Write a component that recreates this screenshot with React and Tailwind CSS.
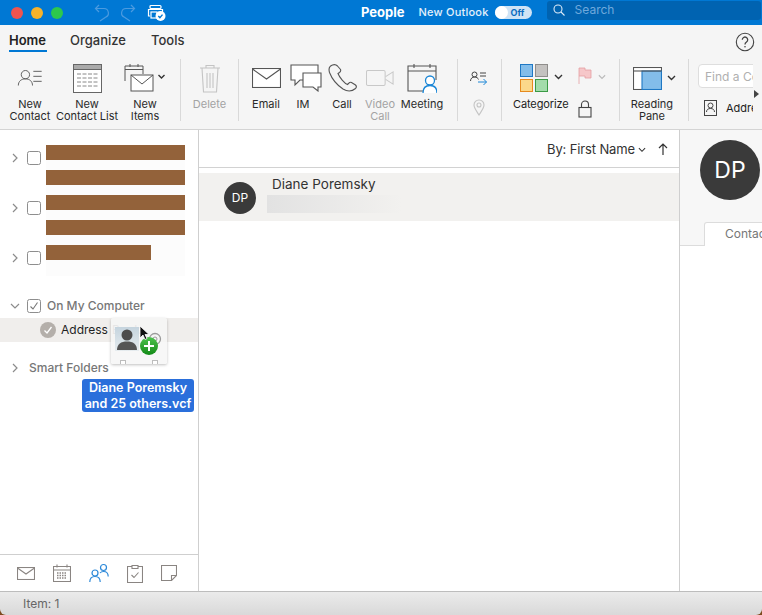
import React from "react";

const Sep = ({ ml = "" }) => <div className={`w-px h-[62px] bg-[#d9d9d9] shrink-0 ${ml}`} />;

const RibbonBtn = ({ w, label, dim, children }) => (
  <div className={`shrink-0 flex flex-col items-center pt-[3px] ${w}`}>
    <div className="h-[32px] w-full flex items-center justify-center">{children}</div>
    <div className={`mt-[4px] text-[11px] leading-[12px] text-center whitespace-pre ${dim ? "text-[#a3a3a3]" : "text-[#2a2a2a]"}`}>{label}</div>
  </div>
);

const Chevron = ({ open, cls = "" }) => (
  <svg width="10" height="10" viewBox="0 0 10 10" className={cls} fill="none" stroke="#8c8c8c" strokeWidth="1.2">
    {open ? <path d="M1 3l4 4 4-4" /> : <path d="M3 1l4 4-4 4" />}
  </svg>
);

const Caret = () => (
  <svg className="shrink-0" width="9" height="6" viewBox="0 0 9 6" fill="none" stroke="#333" strokeWidth="1.4"><path d="M1 1l3.5 3.5L8 1" /></svg>
);

const Check = ({ checked }) => (
  <div className="w-[14px] h-[14px] rounded-[2.5px] border-[1.3px] border-[#8e8e8e] bg-white flex items-center justify-center shrink-0">
    {checked && <svg width="10" height="10" viewBox="0 0 10 10" fill="none" stroke="#777" strokeWidth="1.1"><path d="M1.5 5.5L4 8l4.5-6.5" /></svg>}
  </div>
);

const TreeGroup = ({ rows }) => (
  <div className="flex">
    <div className="w-[46px] h-[25px] pl-[10px] pr-[5px] flex items-center justify-between shrink-0">
      <Chevron />
      <Check />
    </div>
    <div className="w-[139px] flex flex-col">
      {rows.map((w, i) => (
        <div key={i} className="h-[25px] bg-[#fcfcfc]">
          <div className={`h-[15px] bg-[#93623a] ${w}`} />
        </div>
      ))}
    </div>
  </div>
);

export default function App() {
  return (
    <div className="relative w-[762px] h-[615px] overflow-hidden bg-[#7d4a1e] flex flex-col font-['Inter','Liberation_Sans',sans-serif] text-[#222]">
      {/* Title bar */}
      <div className="h-[25px] bg-[#0078d4] flex items-center shrink-0">
        <div className="w-[12px] h-[12px] rounded-full bg-[#f0544f] ml-[11px]" />
        <div className="w-[12px] h-[12px] rounded-full bg-[#f7b32b] ml-[8px]" />
        <div className="w-[12px] h-[12px] rounded-full bg-[#2dc84d] ml-[8px]" />
        <svg className="ml-[31px]" width="16" height="18" viewBox="0 0 16 18" fill="none" stroke="#4b9be0" strokeWidth="1.2">
          <path d="M5 1L1.5 4.5 5 8M1.5 4.5H10a4.5 4.5 0 0 1 1.5 8.7L6 17" />
        </svg>
        <svg className="ml-[10px]" width="16" height="18" viewBox="0 0 16 18" fill="none" stroke="#4b9be0" strokeWidth="1.2">
          <path d="M11 1l3.5 3.5L11 8M14.5 4.5H6a4.5 4.5 0 0 0-1.5 8.7L10 17" />
        </svg>
        <svg className="ml-[11px]" width="20" height="18" viewBox="0 0 20 18" fill="none" stroke="#fff" strokeWidth="1.2">
          <rect x="3" y="1.5" width="11" height="3" rx="1" />
          <path d="M3 12H1.5V5.5h14V8" />
          <rect x="4" y="8" width="6" height="6" />
          <circle cx="13.5" cy="12" r="5" fill="#fff" stroke="none" />
          <path d="M11.3 12l1.6 1.6 2.6-3" stroke="#0078d4" strokeWidth="1.4" />
        </svg>
        <span className="ml-[194px] text-[13px] font-bold text-white leading-none">People</span>
        <span className="ml-[14px] text-[11px] font-medium tracking-[0.02em] text-[#e3f0fb] leading-none">New Outlook</span>
        <div className="ml-[6px] w-[37px] h-[13px] rounded-full bg-[#cfe3f5] flex items-center relative">
          <div className="w-[13px] h-[13px] rounded-full bg-white" />
          <span className="ml-[3px] text-[9px] font-bold text-[#0a6cc0] leading-none">Off</span>
        </div>
        <div className="ml-[15px] w-[214px] h-[19px] mb-[5px] bg-[#0063b1] rounded-[3px] flex items-center">
          <svg className="ml-[6px]" width="12" height="12" viewBox="0 0 12 12" fill="none" stroke="#dcebf8" strokeWidth="1.1"><circle cx="5" cy="5" r="4" /><path d="M8 8l3.5 3.5" /></svg>
          <span className="ml-[10px] text-[12px] text-[#6fa9dc] leading-none">Search</span>
        </div>
      </div>

      {/* Ribbon */}
      <div className="h-[105px] bg-[#f5f5f5] border-b border-[#d4d4d4] shrink-0 flex flex-col">
        <div className="h-[33px] flex items-start pl-[9px] pt-[8px] relative shrink-0">
          <div className="w-[38px] h-[19px] border-b-2 border-[#0078d4] text-[13px] font-semibold leading-[14px] whitespace-nowrap">Home</div>
          <div className="ml-[23px] text-[13px] font-medium leading-[14px] text-[#333]">Organize</div>
          <div className="ml-[25px] text-[13px] font-medium leading-[14px] text-[#333]">Tools</div>
          <svg className="ml-auto mr-[7px] -mt-[1px]" width="20" height="20" viewBox="0 0 20 20" fill="none" stroke="#444" strokeWidth="1.1">
            <circle cx="10" cy="10" r="8.7" />
            <path d="M7.3 7.8a2.7 2.7 0 1 1 4.2 2.2c-1 .7-1.5 1.2-1.5 2.4" strokeWidth="1.3" />
            <circle cx="10" cy="14.8" r=".8" fill="#444" stroke="none" />
          </svg>
        </div>
        <div className="flex items-start pt-[1px] overflow-hidden">
          <RibbonBtn w="w-[60px]" label={"New\nContact"}>
            <svg width="30" height="20" viewBox="0 0 30 24" fill="none" stroke="#555" strokeWidth="1.1">
              <circle cx="9.5" cy="8" r="5" />
              <path d="M1 21c0-5 3.5-8 8.5-8s8.5 3 8.5 8" />
              <path d="M19 4h10M19 10h10M19 16h10" />
            </svg>
          </RibbonBtn>
          <RibbonBtn w="w-[54px]" label={"New\nContact List"}>
            <svg width="29" height="29" viewBox="0 0 29 29" fill="none" stroke="#666" strokeWidth="1">
              <rect x=".5" y=".5" width="28" height="28" fill="#fff" />
              <rect x=".5" y=".5" width="28" height="5" fill="#aaa" />
              <path d="M4 10h21M4 14h21M4 18h21M4 22h21" stroke="#888" strokeDasharray="4 1.5" />
            </svg>
          </RibbonBtn>
          <RibbonBtn w="w-[62px]" label={"New\nItems"}>
            <svg width="42" height="30" viewBox="0 0 42 30" fill="none" stroke="#555" strokeWidth="1">
              <path d="M1 18V3h18v8M1 6.5h18M6 1v3M14 1v3" />
              <rect x="7" y="12" width="22" height="16" fill="#fff" />
              <path d="M7 12l11 9 11-9" />
              <path d="M34.5 12l3 3 3-3" stroke="#333" strokeWidth="1.4" />
            </svg>
          </RibbonBtn>
          <Sep ml="ml-[4px]" />
          <RibbonBtn w="w-[57px]" label="Delete" dim>
            <svg width="22" height="29" viewBox="0 0 22 29" fill="none" stroke="#c4c4c4" strokeWidth="1.1">
              <path d="M1 4h20M7 4V1.5h8V4M3 4l1.5 24h13L19 4M8 9v15M11 9v15M14 9v15" />
            </svg>
          </RibbonBtn>
          <Sep />
          <RibbonBtn w="w-[54px]" label="Email">
            <svg width="29" height="20" viewBox="0 0 29 20" fill="#fff" stroke="#555" strokeWidth="1.1"><rect x=".5" y=".5" width="28" height="19" /><path d="M.5 1l14 10 14-10" fill="none" /></svg>
          </RibbonBtn>
          <RibbonBtn w="w-[20px]" label="IM">
            <svg className="shrink-0 ml-[5px]" width="32" height="28" viewBox="0 0 32 28" fill="#fff" stroke="#555" strokeWidth="1.1">
              <path d="M1 1h27v15H10l-5 5v-5H1z" />
              <path d="M13 9h18v14h-3v4l-5-4H13z" />
            </svg>
          </RibbonBtn>
          <RibbonBtn w="w-[58px]" label="Call">
            <svg width="29" height="28" viewBox="0 0 29 28" fill="none" stroke="#555" strokeWidth="1.1">
              <path d="M4.5 1C1.5 2 .5 5 1.5 8.5 4 15 9 21 15 25c4 2.500 9 2.500 12.500-.5 1-1 1-2.500 0-3.500l-4-2.500c-1-.5-2 0-3 1l-1 1c-3-1-8-7-9.500-11l1.500-1c1-.8 1.500-1.800 1-3L9.500 2C8 .5 6 .5 4.500 1z" />
            </svg>
          </RibbonBtn>
          <RibbonBtn w="w-[18px]" label={"Video\nCall"} dim>
            <svg className="shrink-0" width="28" height="16" viewBox="0 0 30 17" fill="none" stroke="#c8c8c8" strokeWidth="1.1"><rect x=".5" y=".5" width="20" height="16" rx="1.500" /><path d="M21 7l8-5v13l-8-5" /></svg>
          </RibbonBtn>
          <RibbonBtn w="w-[66px]" label="Meeting">
            <svg width="30" height="30" viewBox="0 0 30 30" fill="none" stroke="#555" strokeWidth="1.1">
              <path d="M16 28H1V3h28v14M1 8h28M7 1v4M23 1v4" />
              <circle cx="23" cy="17.500" r="4.500" fill="#fff" stroke="#1a86d6" strokeWidth="1.300" />
              <path d="M16 30c0-5 3-7.500 7-7.500s7 2.500 7 7.500" fill="#fff" stroke="#1a86d6" strokeWidth="1.300" />
            </svg>
          </RibbonBtn>
          <Sep ml="ml-[2px]" />
          <div className="w-[41px] h-[62px] shrink-0 flex flex-col items-center">
            <svg className="mt-[12px]" width="17" height="14" viewBox="0 0 17 14" fill="none" stroke="#444" strokeWidth="1">
              <circle cx="4.500" cy="3.500" r="2.500" />
              <path d="M.5 10c0-2.500 1.800-4 4-4s3.500 1 4 2.500M10 2h6M10 5h6" />
              <path d="M8 11h8.500M13.500 8l3 3-3 3" stroke="#1a86d6" />
            </svg>
            <svg className="mt-[14px]" width="12" height="17" viewBox="0 0 12 17" fill="none" stroke="#c4c4c4" strokeWidth="1.100"><path d="M6 16C3 11 1 9 1 6a5 5 0 0 1 10 0c0 3-2 5-5 10z" /><circle cx="6" cy="6" r="2" /></svg>
          </div>
          <Sep ml="ml-[2px]" />
          <div className="w-[52px] shrink-0 flex flex-col items-start">
            <div className="h-[32px] ml-[18px] flex items-center mt-[3px]">
              <div className="grid grid-cols-2 gap-[2px] w-[28px] shrink-0">
                <div className="w-[13px] h-[13px] bg-[#83bdea] border border-[#1f78c4]" />
                <div className="w-[13px] h-[13px] bg-[#c4c2c0] border border-[#8f8d8b]" />
                <div className="w-[13px] h-[13px] bg-[#fbd88a] border border-[#e68a1f]" />
                <div className="w-[13px] h-[13px] bg-[#a3dcab] border border-[#3a9a45]" />
              </div>
            </div>
            <div className="mt-[4px] ml-[11px] text-[11px] leading-[12px] tracking-[-0.01em] whitespace-nowrap">Categorize</div>
          </div>
          <div className="w-[65px] shrink-0 flex flex-col">
            <div className="flex items-center h-[36px]">
              <Caret />
              <svg className="ml-[15px] shrink-0 mt-[-2px]" width="14" height="18" viewBox="0 0 14 18" fill="#f6c7c9" stroke="#e49ea2" strokeWidth=".8"><path d="M1 17V1h6v2h6v8H7V9H1" /></svg>
              <svg className="ml-[6px] shrink-0" width="8" height="6" viewBox="0 0 9 6" fill="none" stroke="#bbb" strokeWidth="1.300"><path d="M1 1l3.500 3.500L8 1" /></svg>
            </div>
            <svg className="ml-[24px] mt-[5px]" width="14" height="18" viewBox="0 0 14 18" fill="none" stroke="#444" strokeWidth="1.100"><rect x="1" y="7.500" width="12" height="9.500" /><path d="M3.500 7.500V4.500a3.500 3.500 0 0 1 7 0v3" /></svg>
          </div>
          <Sep />
          <RibbonBtn w="w-[64px]" label={"Reading\nPane"}>
            <div className="flex items-center ml-[5px]">
              <svg className="shrink-0" width="29" height="23" viewBox="0 0 29 23" fill="none" stroke="#555" strokeWidth="1.100">
                <rect x=".5" y=".5" width="28" height="22" fill="#fff" />
                <rect x="9" y="4" width="19.500" height="18.500" fill="#83bdea" stroke="#1f78c4" />
                <path d="M.5 4h28" />
              </svg>
              <div className="ml-[5px]"><Caret /></div>
            </div>
          </RibbonBtn>
          <Sep ml="ml-[4px]" />
          <div className="ml-[9px] w-[55px] shrink-0 flex flex-col overflow-hidden">
            <div className="h-[24px] w-[60px] mt-[5px] bg-white border border-[#dedede] rounded-[4px] pl-[6px] text-[12px] leading-[23px] text-[#b0b0b0] whitespace-nowrap">Find a Contact</div>
            <div className="flex items-center mt-[12px] pl-[6px]">
              <svg className="shrink-0" width="13" height="16" viewBox="0 0 13 16" fill="none" stroke="#444" strokeWidth="1"><rect x=".5" y=".5" width="12" height="15" /><circle cx="6.500" cy="5.500" r="2.500" /><path d="M2.500 12c0-2.500 1.800-3.500 4-3.500s4 1 4 3.500" /></svg>
              <span className="ml-[9px] text-[11px] whitespace-nowrap">Address Book</span>
            </div>
          </div>
          <div className="w-[5px] h-[62px] flex items-center ml-[1px]">
            <div className="w-0 h-0 border-y-[4px] border-y-transparent border-l-[5px] border-l-[#444] mt-[7px]" />
          </div>
        </div>
      </div>

      {/* Main */}
      <div className="flex-1 flex min-h-0 bg-white">
        {/* Sidebar */}
        <div className="w-[199px] shrink-0 border-r border-[#cfcfcf] flex flex-col">
          <div className="flex-1 pt-[15px] flex flex-col">
            <TreeGroup rows={["w-full", "w-full"]} />
            <TreeGroup rows={["w-full", "w-full"]} />
            <div className="flex">
              <div className="w-[46px] h-[25px] pl-[10px] pr-[5px] flex items-center justify-between shrink-0"><Chevron /><Check /></div>
              <div className="w-[139px] h-[31px] bg-[#fcfcfc]"><div className="h-[15px] w-[105px] bg-[#93623a]" /></div>
            </div>
            <div className="h-[24px] mt-[18px] flex items-center pl-[10px]">
              <Chevron open />
              <div className="ml-[7px]"><Check checked /></div>
              <span className="ml-[6px] text-[12px] font-medium text-[#777]">On My Computer</span>
            </div>
            <div className="h-[24px] mt-0 bg-[#f0eeec] flex items-center pl-[40px] relative">
              <div className="w-[16px] h-[16px] rounded-full bg-[#b4afaa] flex items-center justify-center">
                <svg width="10" height="10" viewBox="0 0 10 10" fill="none" stroke="#fff" strokeWidth="1.300"><path d="M1.500 5.500L4 8l4.500-6" /></svg>
              </div>
              <span className="ml-[5px] text-[12px] text-[#1f1f1f]">Address</span>
              <span className="ml-[4px] text-[12px] text-[#8f8d8b]">Book</span>
            </div>
            <div className="h-[24px] mt-[14px] flex items-center pl-[10px]">
              <Chevron />
              <span className="ml-[9px] text-[12px] font-medium text-[#777]">Smart Folders</span>
            </div>
          </div>
          <div className="h-[37px] border-t border-[#cfcfcf] flex items-center pl-[17px] gap-[18px] shrink-0">
            <svg width="18" height="13" viewBox="0 0 18 13" fill="none" stroke="#8a8582" strokeWidth="1.100"><rect x=".5" y=".5" width="17" height="12" /><path d="M.5 1l8.500 6 8.500-6" /></svg>
            <svg width="18" height="18" viewBox="0 0 18 18" fill="none" stroke="#8a8582" strokeWidth="1.100"><path d="M.5 2.500h17v15H.5zM.5 6h17M4 .5v3M14 .5v3" /><path d="M4 9h10M4 11.500h10M4 14h10" strokeWidth="1.500" strokeDasharray="1.500 1" /></svg>
            <svg width="20" height="20" viewBox="0 0 20 20" fill="none" stroke="#2b88d8" strokeWidth="1.200"><circle cx="6" cy="10" r="3" /><path d="M.8 19c0-3.500 2-5.500 5.200-5.500s5.200 2 5.200 5.500" /><circle cx="14.500" cy="4.500" r="3" /><path d="M11 10c.8-1 2-1.500 3.500-1.500 2.800 0 4.700 1.800 4.700 5" /></svg>
            <svg width="16" height="19" viewBox="0 0 16 19" fill="none" stroke="#8a8582" strokeWidth="1.100"><path d="M5 2.500H.5v16h15v-16H11" /><path d="M5 1.500h6v3H5z" /><path d="M4.500 11l2.500 2.500 4.500-5" /></svg>
            <svg width="16" height="16" viewBox="0 0 16 16" fill="none" stroke="#8a8582" strokeWidth="1.100"><path d="M.5.500h15v10l-5 5H.5z" /><path d="M15.500 10.500h-5v5" /></svg>
          </div>
        </div>

        {/* List */}
        <div className="w-[480px] shrink-0 flex flex-col">
          <div className="h-[38px] border-b border-[#d2d2d2] pt-[3px] flex items-center justify-end pr-[11px]">
            <span className="text-[13px] tracking-[-0.01em] text-[#333]">By: First Name</span>
            <svg className="ml-[3px]" width="8" height="6" viewBox="0 0 9 6" fill="none" stroke="#333" strokeWidth="1.200"><path d="M1 1l3.500 3.500L8 1" /></svg>
            <svg className="ml-[12px] -mt-[2px]" width="10" height="12" viewBox="0 0 10 12" fill="none" stroke="#333" strokeWidth="1.200"><path d="M5 12V1M1 5l4-4 4 4" /></svg>
          </div>
          <div className="mt-[5px] h-[48px] bg-[#f2f1ef] flex items-center pl-[25px]">
            <div className="w-[32px] h-[32px] mt-[2px] rounded-full bg-[#3a3a3a] flex items-center justify-center text-white text-[12px]">DP</div>
            <div className="ml-[11px] flex flex-col">
              <span className="ml-[5px] text-[13.5px] leading-[16px] -mt-[5px] text-[#333]">Diane Poremsky</span>
              <div className="mt-[3px] w-[135px] h-[18px] bg-gradient-to-r from-[#e2e2e2] to-[#f2f1ef]" />
            </div>
          </div>
        </div>

        {/* Right pane */}
        <div className="flex-1 bg-[#f7f7f7] border-l border-[#cfcfcf] flex flex-col overflow-hidden">
          <div className="mt-[10px] ml-[20px] w-[60px] h-[60px] rounded-full bg-[#3a3a3a] flex items-center justify-center text-white text-[23px] shrink-0">DP</div>
          <div className="mt-[22px] h-[24px] border-b border-[#dcdcdc] pl-[24px] shrink-0">
            <div className="w-[70px] h-[24px] bg-white border border-[#dcdcdc] border-b-0 rounded-t-[3px] pl-[20px] text-[12px] leading-[22px] text-[#777] whitespace-nowrap">Contact</div>
          </div>
          <div className="flex-1 bg-white" />
        </div>
      </div>

      {/* Status bar */}
      <div className="h-[24px] shrink-0 bg-gradient-to-b from-[#ebebeb] to-[#d9d9d9] border-t border-[#bdbdbd] rounded-b-[6px] pl-[23px] flex items-center text-[12px] text-[#666]">Item: 1</div>

      {/* Drag overlay */}
      <div className="absolute left-[111px] top-[318px] w-[56px] h-[46px] bg-[#f6f6f6]/85 shadow-[0_1px_3px_rgba(0,0,0,0.25)] rounded-[2px]">
        <svg className="absolute left-[4px] top-[9px]" width="50" height="26" viewBox="0 0 50 26">
          <defs>
            <linearGradient id="tile" x1="0" y1="0" x2="0" y2="1"><stop offset="0" stopColor="#c5d4de" /><stop offset="1" stopColor="#e6ecef" /></linearGradient>
          </defs>
          <rect x="0" y="0" width="24" height="24" fill="url(#tile)" />
          <circle cx="12" cy="8" r="5.500" fill="#4c4c4c" />
          <path d="M2 23c0-6 4-8.500 10-8.500S22 17 22 23z" fill="#555" />
          <circle cx="40" cy="12" r="5.500" fill="none" stroke="#9a9a9a" strokeWidth="1.300" />
          <circle cx="40" cy="12" r="2" fill="none" stroke="#9a9a9a" strokeWidth="1" />
        </svg>
        <div className="absolute left-[29px] top-[19px] w-[18px] h-[18px] rounded-full bg-gradient-to-b from-[#4cc34c] to-[#0f8a16] flex items-center justify-center">
          <div className="relative w-[10px] h-[10px]">
            <div className="absolute left-0 top-[4px] w-[10px] h-[2px] bg-white" />
            <div className="absolute left-[4px] top-0 w-[2px] h-[10px] bg-white" />
          </div>
        </div>
        <div className="absolute left-[9px] bottom-0 w-[6px] h-[4px] bg-white border border-b-0 border-[#bdbdbd]" />
        <div className="absolute left-[41px] bottom-0 w-[6px] h-[4px] bg-white border border-b-0 border-[#bdbdbd]" />
      </div>
      <svg className="absolute left-[139px] top-[325px]" width="11" height="16" viewBox="0 0 11 16"><path d="M1 1v12l3-3 2 4.500 2-1-2-4h4z" fill="#111" stroke="#fff" strokeWidth=".8" /></svg>
      <div className="absolute left-[82px] top-[379px] w-[112px] h-[33px] rounded-[3px] bg-[#2a6fdb] text-white text-[12.5px] font-semibold leading-[16px] text-center pt-[1px]">
        Diane Poremsky<br />and 25 others.vcf
      </div>
    </div>
  );
}
